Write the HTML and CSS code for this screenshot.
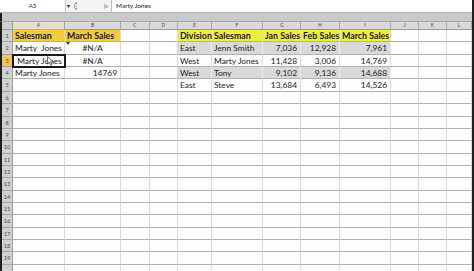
FILE: index.html
```html
<!DOCTYPE html>
<html>
<head>
<meta charset="utf-8">
<link rel="stylesheet" href="styles.css">
</head>
<body>
<div class="app">
  <div class="fbar">
    <div class="namebox">A3</div>
    <div class="tools">
      <span class="dd">▾</span>
      <svg class="grip" width="7" height="10" viewBox="0 0 7 10"><path d="M5 1.2 A4 4 0 0 0 5 8.8" fill="none" stroke="#9a9a9a" stroke-width="0.9"/><circle cx="4.2" cy="2.5" r="0.6" fill="#555"/><circle cx="4.2" cy="5" r="0.6" fill="#555"/><circle cx="4.2" cy="7.5" r="0.6" fill="#555"/></svg>
      <span class="fx">fx</span>
    </div>
    <div class="finput">Marty Jones</div>
  </div>
  <div class="band"></div>
  <div class="sheet">
    <span class="corner"></span><span class="ch cha">A</span><span class="ch">B</span><span class="ch">C</span><span class="ch">D</span><span class="ch">E</span><span class="ch">F</span><span class="ch">G</span><span class="ch">H</span><span class="ch">I</span><span class="ch">J</span><span class="ch">K</span><span class="ch">L</span>

    <span class="rh">1</span><span class="c hy b">Salesman</span><span class="c hy b">March Sales</span><span class="c"></span><span class="c"></span><span class="c yl b">Division</span><span class="c yl b">Salesman</span><span class="c yl b r hr">Jan Sales</span><span class="c yl b r hr">Feb Sales</span><span class="c yl b r hr">March Sales</span><span class="c"></span><span class="c"></span><span class="c"></span>

    <span class="rh">2</span><span class="c">Marty  Jones</span><span class="c m err">#N/A</span><span class="c"></span><span class="c"></span><span class="c g">East</span><span class="c g">Jenn Smith</span><span class="c g r">7,036</span><span class="c g r">12,928</span><span class="c g r">7,961</span><span class="c"></span><span class="c"></span><span class="c"></span>

    <span class="rh rsel">3</span><span class="c act"> Marty Jones<svg class="cursor" width="7" height="10" viewBox="0 0 7 10"><path d="M0.5 0.5 L0.5 8 L2.4 6.3 L3.7 9.3 L5 8.7 L3.7 5.8 L6.3 5.8 Z" fill="#fffbe0" stroke="#333" stroke-width="0.7" stroke-linejoin="round"/></svg></span><span class="c m">#N/A</span><span class="c"></span><span class="c"></span><span class="c">West</span><span class="c">Marty Jones</span><span class="c r">11,428</span><span class="c r">3,006</span><span class="c r">14,769</span><span class="c"></span><span class="c"></span><span class="c"></span>

    <span class="rh">4</span><span class="c">Marty Jones</span><span class="c r">14769</span><span class="c"></span><span class="c"></span><span class="c g">West</span><span class="c g">Tony</span><span class="c g r">9,102</span><span class="c g r">9,136</span><span class="c g r">14,688</span><span class="c"></span><span class="c"></span><span class="c"></span>

    <span class="rh">5</span><span class="c"></span><span class="c"></span><span class="c"></span><span class="c"></span><span class="c">East</span><span class="c">Steve</span><span class="c r">13,684</span><span class="c r">6,493</span><span class="c r">14,526</span><span class="c"></span><span class="c"></span><span class="c"></span>

    <span class="rh">6</span><span class="c"></span><span class="c"></span><span class="c"></span><span class="c"></span><span class="c"></span><span class="c"></span><span class="c"></span><span class="c"></span><span class="c"></span><span class="c"></span><span class="c"></span><span class="c"></span>
    <span class="rh">7</span><span class="c"></span><span class="c"></span><span class="c"></span><span class="c"></span><span class="c"></span><span class="c"></span><span class="c"></span><span class="c"></span><span class="c"></span><span class="c"></span><span class="c"></span><span class="c"></span>
    <span class="rh">8</span><span class="c"></span><span class="c"></span><span class="c"></span><span class="c"></span><span class="c"></span><span class="c"></span><span class="c"></span><span class="c"></span><span class="c"></span><span class="c"></span><span class="c"></span><span class="c"></span>
    <span class="rh">9</span><span class="c"></span><span class="c"></span><span class="c"></span><span class="c"></span><span class="c"></span><span class="c"></span><span class="c"></span><span class="c"></span><span class="c"></span><span class="c"></span><span class="c"></span><span class="c"></span>
    <span class="rh">10</span><span class="c"></span><span class="c"></span><span class="c"></span><span class="c"></span><span class="c"></span><span class="c"></span><span class="c"></span><span class="c"></span><span class="c"></span><span class="c"></span><span class="c"></span><span class="c"></span>
    <span class="rh">11</span><span class="c"></span><span class="c"></span><span class="c"></span><span class="c"></span><span class="c"></span><span class="c"></span><span class="c"></span><span class="c"></span><span class="c"></span><span class="c"></span><span class="c"></span><span class="c"></span>
    <span class="rh">12</span><span class="c"></span><span class="c"></span><span class="c"></span><span class="c"></span><span class="c"></span><span class="c"></span><span class="c"></span><span class="c"></span><span class="c"></span><span class="c"></span><span class="c"></span><span class="c"></span>
    <span class="rh">13</span><span class="c"></span><span class="c"></span><span class="c"></span><span class="c"></span><span class="c"></span><span class="c"></span><span class="c"></span><span class="c"></span><span class="c"></span><span class="c"></span><span class="c"></span><span class="c"></span>
    <span class="rh">14</span><span class="c"></span><span class="c"></span><span class="c"></span><span class="c"></span><span class="c"></span><span class="c"></span><span class="c"></span><span class="c"></span><span class="c"></span><span class="c"></span><span class="c"></span><span class="c"></span>
    <span class="rh">15</span><span class="c"></span><span class="c"></span><span class="c"></span><span class="c"></span><span class="c"></span><span class="c"></span><span class="c"></span><span class="c"></span><span class="c"></span><span class="c"></span><span class="c"></span><span class="c"></span>
    <span class="rh">16</span><span class="c"></span><span class="c"></span><span class="c"></span><span class="c"></span><span class="c"></span><span class="c"></span><span class="c"></span><span class="c"></span><span class="c"></span><span class="c"></span><span class="c"></span><span class="c"></span>
    <span class="rh">17</span><span class="c"></span><span class="c"></span><span class="c"></span><span class="c"></span><span class="c"></span><span class="c"></span><span class="c"></span><span class="c"></span><span class="c"></span><span class="c"></span><span class="c"></span><span class="c"></span>
    <span class="rh">18</span><span class="c"></span><span class="c"></span><span class="c"></span><span class="c"></span><span class="c"></span><span class="c"></span><span class="c"></span><span class="c"></span><span class="c"></span><span class="c"></span><span class="c"></span><span class="c"></span>
    <span class="rh">19</span><span class="c"></span><span class="c"></span><span class="c"></span><span class="c"></span><span class="c"></span><span class="c"></span><span class="c"></span><span class="c"></span><span class="c"></span><span class="c"></span><span class="c"></span><span class="c"></span>
    <span class="rh"></span><span class="c"></span><span class="c"></span><span class="c"></span><span class="c"></span><span class="c"></span><span class="c"></span><span class="c"></span><span class="c"></span><span class="c"></span><span class="c"></span><span class="c"></span><span class="c"></span>
  </div>
</div>
</body>
</html>
```

FILE: styles.css
```css
* { box-sizing: border-box; margin: 0; padding: 0; }
html, body { width: 474px; height: 271px; overflow: hidden; background: #fff; }
body { font-family: Lato, "Liberation Sans", sans-serif; color: #1c1c1c; }

.app {
  width: 474px; height: 271px;
  border-right: 2px solid #1e1e1e;
  display: flex; flex-direction: column;
  overflow: hidden;
}

.fbar {
  height: 13px; flex: none;
  display: flex;
  background: #f4f4f4;
  border-bottom: 1px solid #b3b3b3;
}
.namebox {
  width: 66px;
  background: #fff;
  border-right: 1px solid #c6c6c6;
  font-size: 6px; line-height: 12px;
  text-align: center; color: #333;
}
.tools {
  width: 45px;
  display: flex; align-items: center;
  padding: 0 3px 0 1px;
}
.dd { font-size: 6px; color: #222; line-height: 12px; }
.grip { margin-left: 2px; }
.fx {
  margin-left: auto;
  font-family: "Liberation Serif", serif; font-style: italic;
  font-size: 6px; color: #666;
}
.finput {
  flex: 1;
  background: #fff;
  border-left: 1px solid #bdbdbd;
  font-size: 6.5px; line-height: 12px;
  padding-left: 4px; color: #222;
}

.band {
  height: 9px; flex: none;
  background: #cacaca;
  border-left: 2px solid #1e1e1e;
  border-bottom: 1px solid #a8a8a8;
}

.sheet {
  flex: 1;
  display: grid;
  grid-template-columns: 11px 52px 56px 29px 28px 34px 51px 38px 39px 51px 28px 28px 25px;
  grid-template-rows: 8px;
  grid-auto-rows: 12.37px;
  border-left: 2px solid #1e1e1e;
  background: #fdfdfd;
  overflow: hidden;
}

.corner {
  background: #d0d0d0;
  border-right: 1px solid #9c9c9c;
  border-bottom: 1px solid #9c9c9c;
}
.ch {
  background: #d9d9d9;
  border-right: 1px solid #a6a6a6;
  border-bottom: 1px solid #9a9a9a;
  font-size: 5px; line-height: 7px;
  text-align: center; color: #4a4a4a;
}
.cha { background: #e4dfcd; border-bottom-color: #d8b24a; }

.rh {
  background: #d1d1d1;
  border-right: 1px solid #9c9c9c;
  border-bottom: 1px solid #a4a4a4;
  font-size: 5.5px; line-height: 12px;
  text-align: center; color: #4a4a4a;
}
.rsel { background: #efc850; }

.c {
  position: relative;
  border-right: 1px solid #dadada;
  border-bottom: 1px solid #b0b0b0;
  font-size: 8.4px; line-height: 12px;
  padding: 0 2px;
  white-space: pre;
  overflow: visible;
}
.b { font-weight: 700; font-size: 8.8px; }
.r { text-align: right; padding-right: 3px; }
.hr { padding-right: 1px; }
.m { text-align: center; }
.hy { background: #f3cd3e; }
.yl { background: #f0ee3c; }
.g { background: #d9d9d9; border-right-color: #ececec; }

.act {
  outline: 2px solid #1a1a1a;
  outline-offset: -1px;
  z-index: 1;
}
.cursor {
  position: absolute;
  left: 34px; top: 1px;
}
.err::before {
  content: "";
  position: absolute;
  left: 1px; top: 0;
  border-left: 2px solid transparent;
  border-right: 2px solid transparent;
  border-top: 3px solid #333;
}
```
